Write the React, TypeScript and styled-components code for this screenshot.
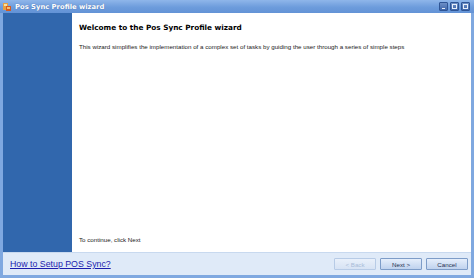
import styled, { createGlobalStyle } from 'styled-components'

const Global = createGlobalStyle`
  html, body { margin: 0; padding: 0; background: #ffffff; }
  body { font-family: "Liberation Sans", Arial, sans-serif; }
`;

const Window = styled.div`
  width: 474px;
  height: 278px;
  display: flex;
  flex-direction: column;
  background: #7fa8e0;
  box-sizing: border-box;
  padding: 0 3px 3px 3px;
  overflow: hidden;
`;

const TitleBar = styled.div`
  height: 13px;
  display: flex;
  align-items: center;
  margin: 0 -3px;
  padding: 0 4px 0 3px;
  background: linear-gradient(to bottom, #8fb6ea 0%, #6d9cdc 55%, #6393d6 100%);
`;

const TitleText = styled.span`
  flex: 1;
  margin-left: 4px;
  color: #ffffff;
  font-family: "DejaVu Sans", Verdana, sans-serif;
  font-weight: bold;
  font-size: 6.8px;
  text-shadow: 0 0 1px rgba(40, 70, 130, 0.6);
`;

const WinButtons = styled.div`
  display: flex;
  gap: 2px;
`;

const WinButton = styled.div`
  width: 9px;
  height: 9px;
  border-radius: 1px;
  background: linear-gradient(to bottom, #6d8fc6, #3f66aa);
  border: 1px solid #2f5595;
  box-sizing: border-box;
  display: flex;
  align-items: center;
  justify-content: center;
`;

const Glyph = styled.div<{ $kind: 'min' | 'max' | 'close' }>`
  width: 3px;
  height: ${p => (p.$kind === 'min' ? '1px' : '3px')};
  margin-top: ${p => (p.$kind === 'min' ? '3px' : '0')};
  background: ${p => (p.$kind === 'min' ? '#e8eef8' : 'transparent')};
  border: ${p => (p.$kind === 'min' ? 'none' : '1px solid #e8eef8')};
`;

const Main = styled.div`
  flex: 1;
  display: flex;
  min-height: 0;
`;

const Sidebar = styled.div`
  width: 69px;
  background: #3167ad;
`;

const Content = styled.div`
  flex: 1;
  background: #ffffff;
  display: flex;
  flex-direction: column;
  padding: 10px 7px 9px 7px;
`;

const Heading = styled.h1`
  margin: 0;
  font-family: "DejaVu Sans", Verdana, sans-serif;
  font-size: 7.3px;
  font-weight: bold;
  color: #000000;
`;

const Text = styled.p`
  margin: 11px 0 0 0;
  font-size: 6.2px;
  color: #1a1a1a;
`;

const Spacer = styled.div`
  flex: 1;
`;

const Footer = styled.div`
  height: 22px;
  display: flex;
  align-items: center;
  background: #dfeaf8;
  border-top: 1px solid #c8d9ef;
  padding: 0 3px 0 7px;
`;

const HelpLink = styled.a`
  flex: 1;
  color: #1c1cad;
  font-size: 8.8px;
  text-decoration: underline;
`;

const Button = styled.button<{ $disabled?: boolean }>`
  width: 42px;
  height: 12px;
  margin-left: 4px;
  padding: 0;
  font-family: "Liberation Sans", Arial, sans-serif;
  font-size: 6.2px;
  color: ${p => (p.$disabled ? '#a9bcd8' : '#1f2f4f')};
  border: 1px solid ${p => (p.$disabled ? '#b7cbe6' : '#7d9cc8')};
  border-radius: 1px;
  background: ${p => (p.$disabled
    ? 'linear-gradient(to bottom, #e9f0fa, #d7e3f4)'
    : 'linear-gradient(to bottom, #e5eefb, #bfd2ee)')};
`;

export default function App() {
  return (
    <>
      <Global />
      <Window>
        <TitleBar>
          <svg width="8" height="9" viewBox="0 0 8 9">
            <rect x="0" y="1" width="5" height="7" fill="#e8a040" />
            <rect x="1" y="2" width="3" height="2" fill="#f8e0a0" />
            <rect x="3" y="4" width="5" height="5" fill="#d45a20" />
            <rect x="4" y="5" width="3" height="2" fill="#f5c070" />
          </svg>
          <TitleText>Pos Sync Profile wizard</TitleText>
          <WinButtons>
            <WinButton><Glyph $kind="min" /></WinButton>
            <WinButton><Glyph $kind="max" /></WinButton>
            <WinButton><Glyph $kind="close" /></WinButton>
          </WinButtons>
        </TitleBar>
        <Main>
          <Sidebar />
          <Content>
            <Heading>Welcome to the Pos Sync Profile wizard</Heading>
            <Text>This wizard simplifies the implementation of a complex set of tasks by guiding the user through a series of simple steps</Text>
            <Spacer />
            <Text>To continue, click Next</Text>
          </Content>
        </Main>
        <Footer>
          <HelpLink href="#">How to Setup POS Sync?</HelpLink>
          <Button $disabled>&lt; Back</Button>
          <Button>Next &gt;</Button>
          <Button>Cancel</Button>
        </Footer>
      </Window>
    </>
  );
}
